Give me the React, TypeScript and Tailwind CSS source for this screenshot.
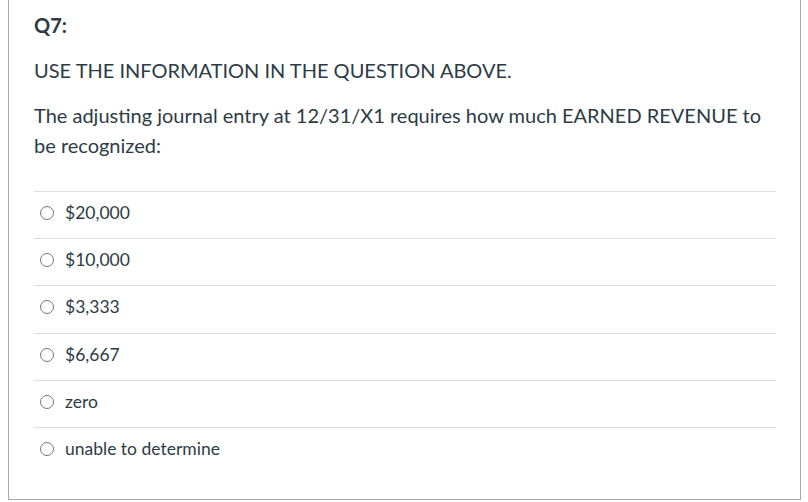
const options = ["$20,000", "$10,000", "$3,333", "$6,667", "zero", "unable to determine"];

export default function App() {
  return (
    <div className="h-[502px] w-[808px] bg-white pl-2 font-['Lato',sans-serif] text-[#2d3b45]">
      <div className="-mt-px h-[501px] w-[793px] border border-[#aaaaaa] pl-[25px] pr-[24px] pt-[10px]">
        <h2 className="text-[20px] font-bold leading-[30px]">Q7:</h2>
        <p className="mt-[15px] text-[20px] leading-[30px]">USE THE INFORMATION IN THE QUESTION ABOVE.</p>
        <p className="mt-[15px] text-[20px] leading-[30px]">
          The adjusting journal entry at 12/31/X1 requires how much EARNED REVENUE to be recognized:
        </p>
        <div className="mt-[31px]">
          {options.map((opt) => (
            <label key={opt} className="flex h-[47.2px] items-center gap-[11px] border-t border-[#dddddd] pb-[4px] pl-[6px]">
              <span className="h-[14px] w-[14px] rounded-full border border-[#777777] bg-white" />
              <span className="text-[17.5px] leading-[26px]">{opt}</span>
            </label>
          ))}
        </div>
      </div>
    </div>
  );
}
